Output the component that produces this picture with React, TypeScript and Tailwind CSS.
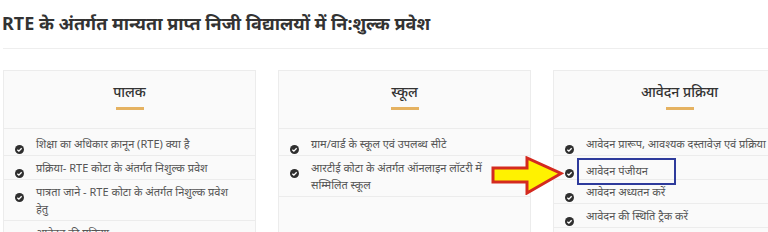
import React from 'react';

const cards = [
  {
    title: 'पालक',
    items: [
      'शिक्षा का अधिकार क़ानून (RTE) क्या है',
      'प्रक्रिया- RTE कोटा के अंतर्गत निशुल्क प्रवेश',
      'पात्रता जाने - RTE कोटा के अंतर्गत निशुल्क प्रवेश\nहेतु',
      'आवेदन की प्रक्रिया',
    ],
  },
  {
    title: 'स्कूल',
    items: ['ग्राम/वार्ड के स्कूल एवं उपलब्ध सीटे', 'आरटीई कोटा के अंतर्गत ऑनलाइन लॉटरी में\nसम्मिलित स्कूल'],
  },
  {
    title: 'आवेदन प्रक्रिया',
    items: [
      'आवेदन प्रारूप, आवश्यक दस्तावेज़ एवं प्रक्रिया',
      'आवेदन पंजीयन',
      'आवेदन अध्यतन करें',
      'आवेदन की स्थिति ट्रैक करें',
    ],
  },
];

function CheckIcon() {
  return (
    <svg viewBox="0 0 10 10" className="-mb-[3px] mt-[10px] h-[9px] w-[9px] shrink-0">
      <circle cx="5" cy="5" r="5" fill="#2f2f2f" />
      <path d="M2.6 5.2 L4.3 6.8 L7.4 3.6" fill="none" stroke="#fff" strokeWidth="1.5" />
    </svg>
  );
}

function Arrow() {
  return (
    <svg className="absolute left-[491px] top-[156px] h-[39px] w-[74px]" viewBox="0 0 74 39">
      <path
        d="M2 12 L36 12 L36 2 L70 17.5 L36 37 L36 26 L2 26 Z"
        fill="#fff200"
        stroke="#d42a1f"
        strokeWidth="3"
        strokeLinejoin="miter"
      />
    </svg>
  );
}

export default function App() {
  return (
    <div
      className="relative h-[232px] w-[768px] overflow-hidden bg-white"
      style={{ fontFamily: '"Noto Sans", "Liberation Sans", sans-serif' }}
    >
      <div className="ml-[3px] border-b border-[#eeeeee] pb-[11px] pt-[9px]">
        <h1 className="-ml-[1px] text-[18px] font-bold leading-[28px] text-[#333]">
          RTE के अंतर्गत मान्यता प्राप्त निजी विद्यालयों में नि:शुल्क प्रवेश
        </h1>
      </div>
      <div className="ml-[3px] mt-[21px] flex gap-[22px]">
        {cards.map((card, ci) => (
          <div key={ci} className="h-[200px] w-[253px] shrink-0 border border-[#ececec] bg-[#fafafa]">
            <div className="flex flex-col items-center border-b border-[#ececec] pb-[18px] pt-[10px]">
              <h2 className="text-[14px] font-medium leading-[22px] text-[#333]">{card.title}</h2>
              <div className="mt-[4px] h-[3px] w-[28px] bg-[#e5b261]" />
            </div>
            <ul className="pt-[3px]">
              {card.items.map((item, i) => (
                <li key={i} className="flex gap-[12px] border-b border-[#ececec] pb-[3px] pl-[11px] pr-[8px] pt-[3px]">
                  <CheckIcon />
                  <span
                    className={
                      ci === 2 && i === 1
                        ? '-mb-[9px] -ml-[9px] -mt-[1px] border-2 border-[#2e3b9c] pb-[4px] pl-[7px] pr-[26px] pt-[2px] text-[11px] leading-[17px] text-[#555]'
                        : 'whitespace-pre-line text-[11px] leading-[17px] text-[#555]'
                    }
                  >
                    {item}
                  </span>
                </li>
              ))}
            </ul>
          </div>
        ))}
      </div>
      <Arrow />
    </div>
  );
}
